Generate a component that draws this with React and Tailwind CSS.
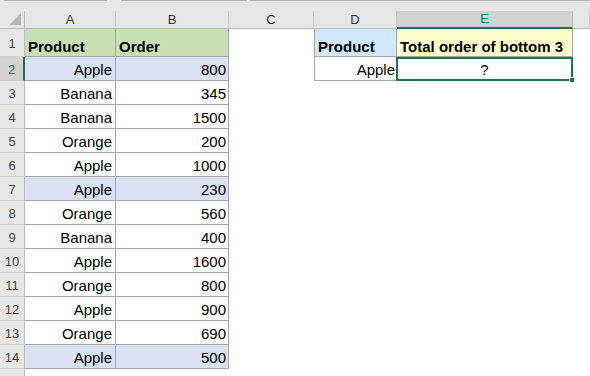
import React from 'react';

const rows = [
    ['Apple', 800, true],
    ['Banana', 345],
    ['Banana', 1500],
    ['Orange', 200],
    ['Apple', 1000],
    ['Apple', 230, true],
    ['Orange', 560],
    ['Banana', 400],
    ['Apple', 1600],
    ['Orange', 800],
    ['Apple', 900],
    ['Orange', 690],
    ['Apple', 500, true],
];

const cols = ['A', 'B', 'C', 'D', 'E', ''];

const RowHead = ({ n, active }) => (
    <div
        className={
            active
                ? 'flex items-center justify-center pt-[2px] bg-[#d2d2d2] border-r-2 border-r-[#217346] border-b border-b-[#c6c6c6] text-[#217346] text-[13px]'
                : 'flex items-center justify-center pt-[2px] bg-[#e6e6e6] border-r border-r-[#bcbcbc] border-b border-b-[#d0d0d0] text-[#444] text-[13px]'
        }
    >
        {n}
    </div>
);

const App = () => {
    return (
        <div
            className="w-[590px] h-[376px] overflow-hidden bg-white text-black"
            style={{ fontFamily: '"Liberation Sans", Arial, sans-serif' }}
        >
            {/* strip above the sheet */}
            <div className="h-[11px] bg-[#e6e6e6] flex items-start">
                <div className="ml-[4px] w-[103px] h-px bg-[#b4b4b4]" />
                <div className="ml-[14px] w-[126px] h-px bg-[#b4b4b4]" />
                <div className="ml-[3px] flex-1 h-px bg-[#b4b4b4]" />
            </div>

            <div className="grid grid-cols-[25px_91px_113px_85px_83px_176px_1fr] grid-rows-[18px_28px_repeat(14,24px)]">
                {/* column headers */}
                <div className="relative bg-[#e6e6e6] border-r border-b border-[#bcbcbc]">
                    <div className="absolute right-[3px] bottom-[3px] w-0 h-0 border-l-[12px] border-l-transparent border-b-[12px] border-b-[#b5b5b5]" />
                </div>
                {cols.map((c) =>
                    c === 'E' ? (
                        <div
                            key={c}
                            className="flex items-center justify-center bg-[#d2d2d2] border-r border-r-[#bcbcbc] border-b-2 border-b-[#217346] text-[13px] text-[#217346]"
                        >
                            {c}
                        </div>
                    ) : (
                        <div
                            key={c || 'F'}
                            className="flex items-center justify-center bg-[#e6e6e6] border-r border-r-[#c8c8c8] border-b border-b-[#bcbcbc] text-[13px] text-[#333]"
                        >
                            {c}
                        </div>
                    )
                )}

                {/* row 1 */}
                <RowHead n={1} />
                <div className="flex items-end pl-[3px] bg-[#c6e0b4] border-r border-b border-[#a6a6a6] text-[15px] font-bold leading-[18px]">
                    Product
                </div>
                <div className="flex items-end pl-[3px] bg-[#c6e0b4] border-r border-b border-[#a6a6a6] text-[15px] font-bold leading-[18px]">
                    Order
                </div>
                <div />
                <div className="flex items-end pl-[3px] bg-[#cfe8fc] border-l border-r border-b border-[#a6a6a6] text-[15px] font-bold leading-[18px]">
                    Product
                </div>
                <div className="flex items-end pl-[3px] bg-[#ffffcc] border-r border-b border-[#a6a6a6] text-[15px] font-bold leading-[18px]">
                    Total order of bottom 3
                </div>
                <div />

                {/* data rows */}
                {rows.map(([product, order, hl], i) => {
                    const n = i + 2;
                    const bg = hl ? 'bg-[#d9e1f2]' : 'bg-white';
                    return (
                        <React.Fragment key={n}>
                            <RowHead n={n} active={n === 2} />
                            <div className={`flex items-center justify-end pr-[3px] pt-[4px] ${bg} border-r border-b border-[#a6a6a6] text-[15px]`}>
                                {product}
                            </div>
                            <div className={`flex items-center justify-end pr-[2px] pt-[4px] ${bg} border-r border-b border-[#a6a6a6] text-[15px]`}>
                                {order}
                            </div>
                            <div />
                            {n === 2 ? (
                                <>
                                    <div className="flex items-center justify-end pr-[2px] pt-[4px] border-l border-b border-[#a6a6a6] text-[15px]">
                                        Apple
                                    </div>
                                    <div className="relative -ml-px flex items-center justify-center pt-[2px] border-2 border-[#217346] text-[15px]">
                                        ?
                                        <div className="absolute -right-[4px] -bottom-[4px] w-[6px] h-[6px] bg-[#217346] border border-white" />
                                    </div>
                                </>
                            ) : (
                                <>
                                    <div />
                                    <div />
                                </>
                            )}
                            <div />
                        </React.Fragment>
                    );
                })}

                {/* row 15 */}
                <RowHead n={15} />
            </div>
        </div>
    );
};

export default App;
